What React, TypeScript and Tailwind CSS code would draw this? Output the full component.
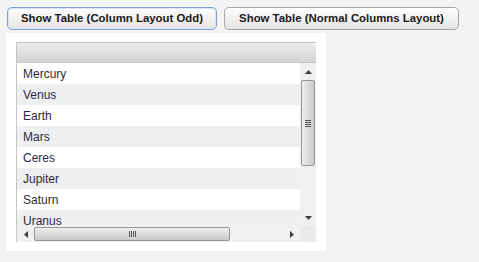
import React from "react";

const PLANETS = ["Mercury", "Venus", "Earth", "Mars", "Ceres", "Jupiter", "Saturn", "Uranus", "Neptune"];

function Arrow({ dir }: { dir: "up" | "down" | "left" | "right" }) {
  const paths = {
    up: "M0 4 L3.5 0 L7 4 Z",
    down: "M0 0 L7 0 L3.5 4 Z",
    left: "M4 0 L4 7 L0 3.5 Z",
    right: "M0 0 L4 3.5 L0 7 Z",
  };
  const vertical = dir === "up" || dir === "down";
  return (
    <svg width={vertical ? 7 : 4} height={vertical ? 4 : 7} viewBox={vertical ? "0 0 7 4" : "0 0 4 7"}>
      <path d={paths[dir]} fill="#404040" />
    </svg>
  );
}

export default function App() {
  return (
    <div className="min-h-[262px] w-[479px] bg-[#f3f3f3] font-['Liberation_Sans',Arial,sans-serif]">
      {/* Buttons */}
      <div className="flex gap-[7px] pl-[7px] pt-[7px]">
        <button className="h-[23px] w-[210px] rounded-[5px] border border-[#7da2ce] bg-gradient-to-b from-[#ffffff] to-[#e4e4e4] text-[11.4px] font-bold text-[#1a1a1a] shadow-[inset_0_0_0_1px_#d8e6f5]">
          Show Table (Column Layout Odd)
        </button>
        <button className="h-[23px] w-[235px] rounded-[5px] border border-[#a6a6a6] bg-gradient-to-b from-[#ffffff] to-[#e4e4e4] text-[11.4px] font-bold text-[#1a1a1a]">
          Show Table (Normal Columns Layout)
        </button>
      </div>

      {/* Panel */}
      <div className="ml-[6px] mt-[3px] w-[320px] bg-white px-[10px] pt-[9px] pb-[9px]">
        <div className="w-[300px] border-l border-t border-[#c6c6c6]">
          {/* Header */}
          <div className="h-[20px] border-b border-[#c8c8c8] bg-gradient-to-b from-[#ececec] to-[#d4d4d4]" />
          {/* Body */}
          <div className="flex h-[163px]">
            <div className="w-[283px] overflow-hidden">
              {PLANETS.map((p, i) => (
                <div
                  key={p}
                  className={`flex h-[21px] items-center pl-[6px] pt-[1px] text-[12px] text-[#2e2a3e] ${
                    i % 2 === 1 ? "bg-[#eeeff1]" : "bg-white"
                  }`}
                >
                  {p}
                </div>
              ))}
            </div>
            {/* Vertical scrollbar */}
            <div className="flex w-[16px] flex-col bg-[#f0f0f0]">
              <div className="flex h-[17px] items-center justify-center">
                <Arrow dir="up" />
              </div>
              <div className="mx-[1px] flex h-[86px] items-center justify-center rounded-[2px] border border-[#979797] bg-gradient-to-r from-[#eeeeee] via-[#dcdcdc] to-[#c9c9c9]">
                <div className="flex flex-col gap-[1px]">
                  <div className="h-[1px] w-[6px] bg-[#555]" />
                  <div className="h-[1px] w-[6px] bg-[#555]" />
                  <div className="h-[1px] w-[6px] bg-[#555]" />
                  <div className="h-[1px] w-[6px] bg-[#555]" />
                </div>
              </div>
              <div className="flex-1" />
              <div className="flex h-[17px] items-center justify-center">
                <Arrow dir="down" />
              </div>
            </div>
          </div>
          {/* Horizontal scrollbar */}
          <div className="flex h-[16px]">
            <div className="flex w-[283px] bg-[#f0f0f0]">
              <div className="flex w-[17px] items-center justify-center">
                <Arrow dir="left" />
              </div>
              <div className="my-[1px] flex w-[196px] items-center justify-center rounded-[2px] border border-[#979797] bg-gradient-to-b from-[#eeeeee] via-[#dcdcdc] to-[#c9c9c9]">
                <div className="flex gap-[1px]">
                  <div className="h-[6px] w-[1px] bg-[#555]" />
                  <div className="h-[6px] w-[1px] bg-[#555]" />
                  <div className="h-[6px] w-[1px] bg-[#555]" />
                  <div className="h-[6px] w-[1px] bg-[#555]" />
                </div>
              </div>
              <div className="flex-1" />
              <div className="flex w-[17px] items-center justify-center">
                <Arrow dir="right" />
              </div>
            </div>
            <div className="w-[16px] bg-[#eaeaea]" />
          </div>
        </div>
      </div>
    </div>
  );
}
